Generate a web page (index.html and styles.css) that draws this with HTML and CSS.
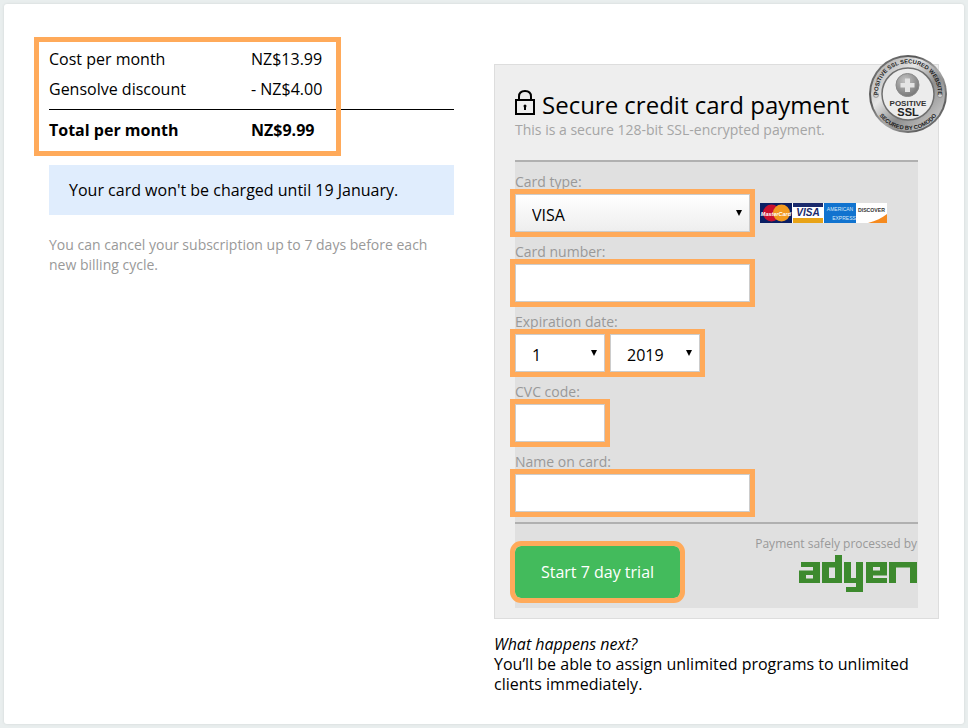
FILE: index.html
```html
<!DOCTYPE html>
<html lang="en">
<head>
    <meta charset="UTF-8">
    <meta name="viewport" content="width=device-width, initial-scale=1.0">
    <title>Secure payment</title>
    <link rel="stylesheet" href="styles.css">
</head>
<body>
    <div class="page">
        <div class="summary-col">
            <div class="summary">
                <div class="highlight-box"></div>
                <div class="row"><span class="row-name">Cost per month</span><span>NZ$13.99</span></div>
                <div class="row row-last"><span class="row-name">Gensolve discount</span><span>- NZ$4.00</span></div>
                <div class="row row-total"><span class="row-name">Total per month</span><span>NZ$9.99</span></div>
            </div>
            <div class="info-box">Your card won't be charged until 19 January.</div>
            <p class="note">You can cancel your subscription up to 7 days before each new billing cycle.</p>
        </div>
        <div class="payment-col">
            <div class="panel">
                <svg class="ssl-badge" width="80" height="80" viewBox="0 0 80 80">
                    <defs>
                        <linearGradient id="ring" x1="0" y1="0" x2="1" y2="1">
                            <stop offset="0" stop-color="#8a8a8a"/>
                            <stop offset="0.3" stop-color="#555"/>
                            <stop offset="0.55" stop-color="#aaa"/>
                            <stop offset="0.8" stop-color="#5e5e5e"/>
                            <stop offset="1" stop-color="#999"/>
                        </linearGradient>
                        <linearGradient id="band" x1="0" y1="0" x2="1" y2="1">
                            <stop offset="0" stop-color="#9a9a9a"/>
                            <stop offset="0.35" stop-color="#e6e6e6"/>
                            <stop offset="0.6" stop-color="#8f8f8f"/>
                            <stop offset="1" stop-color="#dcdcdc"/>
                        </linearGradient>
                        <radialGradient id="plate" cx="0.4" cy="0.3" r="0.8">
                            <stop offset="0" stop-color="#c4c4c4"/>
                            <stop offset="1" stop-color="#6e6e6e"/>
                        </radialGradient>
                        <path id="arc-top" d="M11 47 A30 30 0 1 1 69 47"/>
                        <path id="arc-bottom" d="M7.400 55.200 A36 36 0 0 0 72.600 55.200"/>
                    </defs>
                    <circle cx="40" cy="40" r="39" fill="url(#ring)"/>
                    <circle cx="40" cy="40" r="37" fill="url(#band)"/>
                    <circle cx="40" cy="40" r="26" fill="#ececec" stroke="#6f6f6f" stroke-width="1.500"/>
                    <circle cx="8" cy="41" r="2.500" fill="#d0d0d0" stroke="#666" stroke-width="0.500"/>
                    <circle cx="72" cy="41" r="2.500" fill="#d0d0d0" stroke="#666" stroke-width="0.500"/>
                    <text class="badge-ring"><textPath href="#arc-top" startOffset="50%" text-anchor="middle">POSITIVE SSL SECURED WEBSITE</textPath></text>
                    <text class="badge-ring"><textPath href="#arc-bottom" startOffset="50%" text-anchor="middle">SECURED BY COMODO</textPath></text>
                    <circle cx="39.500" cy="31" r="11.500" fill="url(#plate)" stroke="#8a8a8a"/>
                    <path d="M37 24.500H42V29H46.500V33.500H42V38H37V33.500H32.500V29H37Z" fill="#e4e4e4"/>
                    <text class="badge-positive" x="40" y="52" text-anchor="middle">POSITIVE</text>
                    <text class="badge-ssl" x="40" y="61.500" text-anchor="middle">SSL</text>
                </svg>

                <div class="panel-head">
                    <svg class="lock" width="20" height="25" viewBox="0 0 20 25">
                        <path d="M4 10V6.500C4 3 6.500 1 10 1S16 3 16 6.500V10" fill="none" stroke="#000" stroke-width="2"/>
                        <rect x="1" y="10" width="18" height="14" fill="none" stroke="#000" stroke-width="2"/>
                        <rect x="9" y="16" width="2" height="4" fill="#000"/>
                        <circle cx="10" cy="16" r="1.500" fill="#000"/>
                    </svg>
                    <h2>Secure credit card payment</h2>
                </div>
                <p class="panel-sub">This is a secure 128-bit SSL-encrypted payment.</p>

                <div class="card-form">
                    <label>Card type:</label>
                    <div class="field-line">
                        <div class="select-wrap select-wide">
                            <select class="select-grad"><option>VISA</option></select>
                        </div>
                        <svg class="card-logos" width="127" height="20" viewBox="0 0 127 20">
                            <rect width="32" height="20" fill="#0b1f63"/>
                            <circle cx="11.500" cy="10" r="8.500" fill="#c8102e"/>
                            <circle cx="21.500" cy="10" r="8.500" fill="#f29a1f"/>
                            <text class="logo-mc" x="16" y="12.500" text-anchor="middle">MasterCard</text>
                            <rect x="32" width="32" height="20" fill="#fff"/>
                            <rect x="33" width="30" height="4" fill="#1a2a6c"/>
                            <rect x="33" y="15" width="30" height="5" fill="#e8a317"/>
                            <text class="logo-visa" x="48" y="13" text-anchor="middle">VISA</text>
                            <rect x="64" width="32" height="20" fill="#1173cf"/>
                            <text class="logo-amex" x="80" y="8" text-anchor="middle">AMERICAN</text>
                            <text class="logo-amex" x="84" y="17" text-anchor="middle">EXPRESS</text>
                            <rect x="96" width="31" height="20" fill="#fff"/>
                            <path d="M108 20C116 18 122 15 127 11V20Z" fill="#f58a1f"/>
                            <text class="logo-disc" x="111.500" y="9" text-anchor="middle">DISCOVER</text>
                        </svg>
                    </div>

                    <label>Card number:</label>
                    <input class="input-wide" type="text">

                    <label>Expiration date:</label>
                    <div class="field-line">
                        <div class="select-wrap select-small">
                            <select><option>1</option></select>
                        </div>
                        <div class="select-wrap select-small">
                            <select><option>2019</option></select>
                        </div>
                    </div>

                    <label>CVC code:</label>
                    <input class="input-small" type="text">

                    <label>Name on card:</label>
                    <input class="input-wide" type="text">

                    <div class="form-foot">
                        <button class="start-button">Start 7 day trial</button>
                        <div class="processed">
                            <span>Payment safely processed by</span>
                            <svg class="adyen" width="118" height="37" viewBox="0 0 118 37">
                                <path fill-rule="evenodd" d="M2 7H21V28H0V15.500H14V12H2ZM7 20V23.500H14V20Z"/>
                                <path fill-rule="evenodd" d="M23 7H36V0H43V28H23ZM30 12.500V23H36V12.500Z"/>
                                <path d="M45 7H52V23H57V7H64V37H47V32H57V28H45Z"/>
                                <path fill-rule="evenodd" d="M67 7H88V20.500H74V23H88V28H67ZM74 12V15.500H81V12Z"/>
                                <path d="M90 7H118V28H111V12.500H97V28H90Z"/>
                            </svg>
                        </div>
                    </div>
                </div>
            </div>
            <div class="next-steps">
                <em>What happens next?</em><br>
                You’ll be able to assign unlimited programs to unlimited clients immediately.
            </div>
        </div>
    </div>
</body>
</html>
```

FILE: styles.css
```css
* {
    box-sizing: border-box;
}
body {
    font-family: "Open Sans", Arial, sans-serif;
    font-size: 16px;
    margin: 0;
    height: 728px;
    padding: 4px;
    background: #e9eeee;
    color: #000;
    overflow: hidden;
}
.page {
    height: 720px;
    background: #fff;
    display: flex;
    padding-left: 45px;
    border-radius: 3px;
    box-shadow: 0 0 3px rgba(0,0,0,0.1);
}
.summary-col {
    width: 405px;
    padding-top: 40px;
}
.summary {
    position: relative;
}
.highlight-box {
    position: absolute;
    top: -7px;
    left: -15px;
    width: 307px;
    height: 119px;
    border: 5px solid #ffaa5a;
    pointer-events: none;
}
.row {
    display: flex;
    height: 30px;
    line-height: 30px;
}
.row-name {
    width: 202px;
}
.row-last {
    box-sizing: content-box;
    padding-bottom: 5px;
    border-bottom: 1px solid #000;
}
.row-total {
    height: 40px;
    line-height: 40px;
    font-weight: bold;
}
.info-box {
    margin-top: 15px;
    height: 50px;
    line-height: 50px;
    padding-left: 20px;
    background: #e0edfd;
}
.note {
    margin: 20px 0 0;
    font-size: 14px;
    line-height: 20px;
    color: #999;
}
.payment-col {
    width: 445px;
    margin-left: 40px;
    padding-top: 60px;
}
.panel {
    position: relative;
    height: 555px;
    padding: 0 20px;
    background: #eee;
    border: 1px solid #ddd;
}
.ssl-badge {
    position: absolute;
    top: -11px;
    right: -10px;
}
.badge-ring {
    font-family: "Liberation Sans", Arial, sans-serif;
    font-size: 5.800px;
    font-weight: bold;
    fill: #1c1c1c;
}
.badge-positive {
    font-family: "Liberation Sans", Arial, sans-serif;
    font-size: 8px;
    font-weight: bold;
    fill: #333;
}
.badge-ssl {
    font-family: "Liberation Sans", Arial, sans-serif;
    font-size: 11px;
    font-weight: bold;
    fill: #222;
}
.panel-head {
    display: flex;
    align-items: center;
    gap: 7px;
    height: 32px;
    margin-top: 24px;
}
.panel-head h2 {
    margin: 0;
    font-size: 24px;
    font-weight: normal;
    line-height: 32px;
}
.lock {
    flex: none;
    align-self: flex-start;
    margin-top: 1px;
}
.panel-sub {
    margin: -1px 0 0;
    font-size: 14px;
    line-height: 20px;
    color: #a5a5a5;
}
.card-form {
    margin-top: 20px;
    padding-top: 10px;
    height: 448px;
    background: #e0e0e0;
    border-top: 2px solid #b0b0b0;
}
.card-form label {
    display: block;
    height: 22px;
    font-size: 14px;
    line-height: 20px;
    color: #999;
}
.field-line {
    display: flex;
    align-items: center;
    gap: 5px;
    height: 38px;
    margin-bottom: 10px;
}
.select-wrap {
    position: relative;
    height: 38px;
}
.select-wrap::after {
    content: '';
    position: absolute;
    top: 16px;
    right: 8px;
    border-left: 3px solid transparent;
    border-right: 3px solid transparent;
    border-top: 6px solid #000;
}
.select-wide {
    width: 235px;
}
.select-small {
    width: 90px;
}
select {
    appearance: none;
    width: 100%;
    height: 38px;
    padding: 4px 0 0 16px;
    font-family: inherit;
    font-size: 16px;
    color: #000;
    background: #fff;
    border: 1px solid #ccc;
    border-radius: 0;
    outline: 5px solid #ffaa5a;
}
.select-grad {
    background: linear-gradient(#fff, #eee);
}
.card-logos {
    margin-left: 5px;
}
.logo-mc {
    font-family: "Liberation Sans", Arial, sans-serif;
    font-size: 5.500px;
    font-weight: bold;
    font-style: italic;
    fill: #fff;
}
.logo-visa {
    font-family: "Liberation Sans", Arial, sans-serif;
    font-size: 10px;
    font-weight: bold;
    font-style: italic;
    fill: #1a2a6c;
}
.logo-amex {
    font-family: "Liberation Sans", Arial, sans-serif;
    font-size: 5px;
    fill: #dbeaf8;
}
.logo-disc {
    font-family: "Liberation Sans", Arial, sans-serif;
    font-size: 5.200px;
    font-weight: bold;
    fill: #333;
}
input {
    display: block;
    height: 38px;
    margin-bottom: 10px;
    background: #fff;
    border: 1px solid #ccc;
    outline: 5px solid #ffaa5a;
}
.input-wide {
    width: 235px;
}
.input-small {
    width: 90px;
}
.form-foot {
    display: flex;
    justify-content: space-between;
    border-top: 2px solid #b0b0b0;
    padding-top: 10px;
    margin-top: 10px;
}
.start-button {
    width: 165px;
    height: 52px;
    margin-top: 12px;
    font-family: inherit;
    font-size: 16px;
    color: #fff;
    background: #43bb5c;
    border: none;
    border-radius: 6px;
    outline: 5px solid #ffaa5a;
    cursor: pointer;
}
.processed {
    display: flex;
    flex-direction: column;
    align-items: flex-end;
    padding-right: 1px;
    font-size: 12px;
    line-height: 20px;
    color: #999;
}
.adyen {
    margin-top: 1px;
    fill: #3d8a2e;
}
.next-steps {
    margin-top: 15px;
    line-height: 20px;
}
```
